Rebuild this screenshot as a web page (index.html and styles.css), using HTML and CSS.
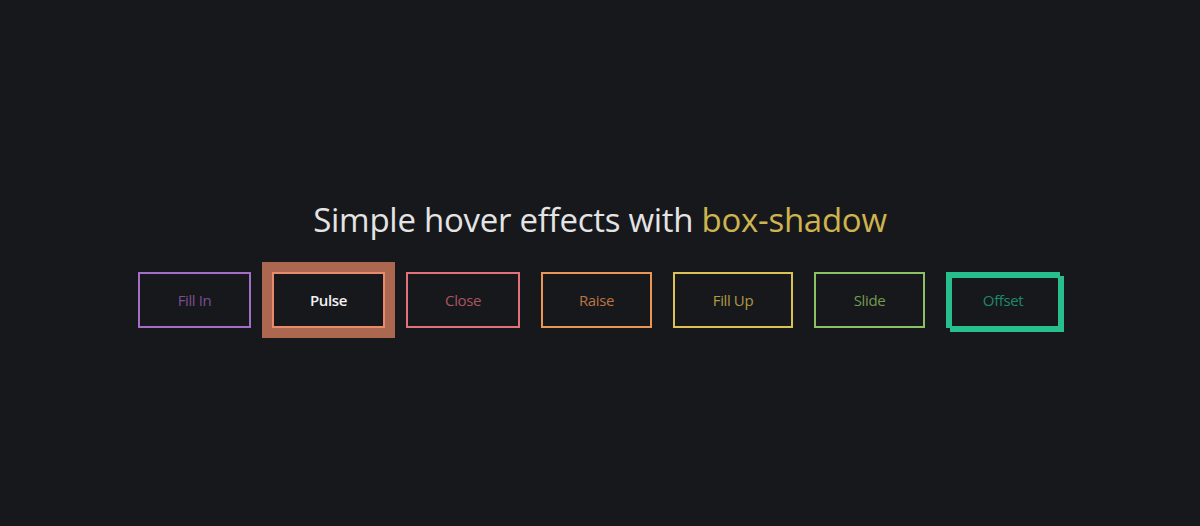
FILE: index.html
```html
<!DOCTYPE html>
<html lang="en">
<head>
<meta charset="utf-8">
<title>Simple hover effects with box-shadow</title>
<link rel="stylesheet" href="styles.css">
</head>
<body>
  <main class="stage">
    <h1 class="title">Simple hover effects with <code class="title-code">box-shadow</code></h1>
    <div class="buttons">
      <button class="btn fill">Fill In</button>
      <button class="btn pulse">Pulse</button>
      <button class="btn close">Close</button>
      <button class="btn raise">Raise</button>
      <button class="btn up">Fill Up</button>
      <button class="btn slide">Slide</button>
      <button class="btn offset">Offset</button>
    </div>
  </main>
</body>
</html>
```
FILE: styles.css
```css
html, body {
  margin: 0;
  padding: 0;
}

body {
  background: #17181c;
  color: #e6e6e6;
  font-family: "Open Sans", "Noto Sans", sans-serif;
  font-size: 17px;
  font-weight: 300;
}

.stage {
  height: 526px;
  display: flex;
  flex-direction: column;
  align-items: center;
  justify-content: center;
}

.title {
  margin: 2px 0 32px;
  font-size: 33px;
  font-weight: 400;
  line-height: 40px;
  letter-spacing: -0.27px;
  color: #e4e4e4;
}

.title-code {
  font: inherit;
  color: #cdb44e;
}

.buttons {
  display: flex;
  gap: 21px;
  margin-left: -2px;
}

.btn {
  box-sizing: border-box;
  height: 56px;
  padding: 0;
  background: none;
  border: 2px solid var(--color);
  color: var(--text);
  font-family: "Open Sans", "Noto Sans", sans-serif;
  font-size: 15px;
  font-weight: 500;
  line-height: 1;
  letter-spacing: -0.4px;
  text-align: center;
}

.fill   { --color: #a46ec6; --text: #7a4f93; width: 113px; }
.pulse  { --color: #e98b6b; --text: #f2f2f2; width: 113px; }
.close  { --color: #e2717a; --text: #a9555f; width: 114px; }
.raise  { --color: #ec9655; --text: #bb7545; width: 111px; }
.up     { --color: #dcc255; --text: #b09a44; width: 120px; }
.slide  { --color: #8cc064; --text: #6f9c4f; width: 111px; }
.offset { --color: #27c08d; --text: #1d8a67; width: 114px; }

/* Pulse is shown mid-animation: a soft ring around the border */
.pulse {
  font-weight: 600;
  box-shadow: 0 0 0 10px rgba(214, 125, 96, 0.78);
}

/* Offset: a shifted outer copy plus an inset ledge on the top-left */
.offset {
  box-shadow: 4px 4px 0 0 var(--color), inset 4px 4px 0 0 var(--color);
}
```
